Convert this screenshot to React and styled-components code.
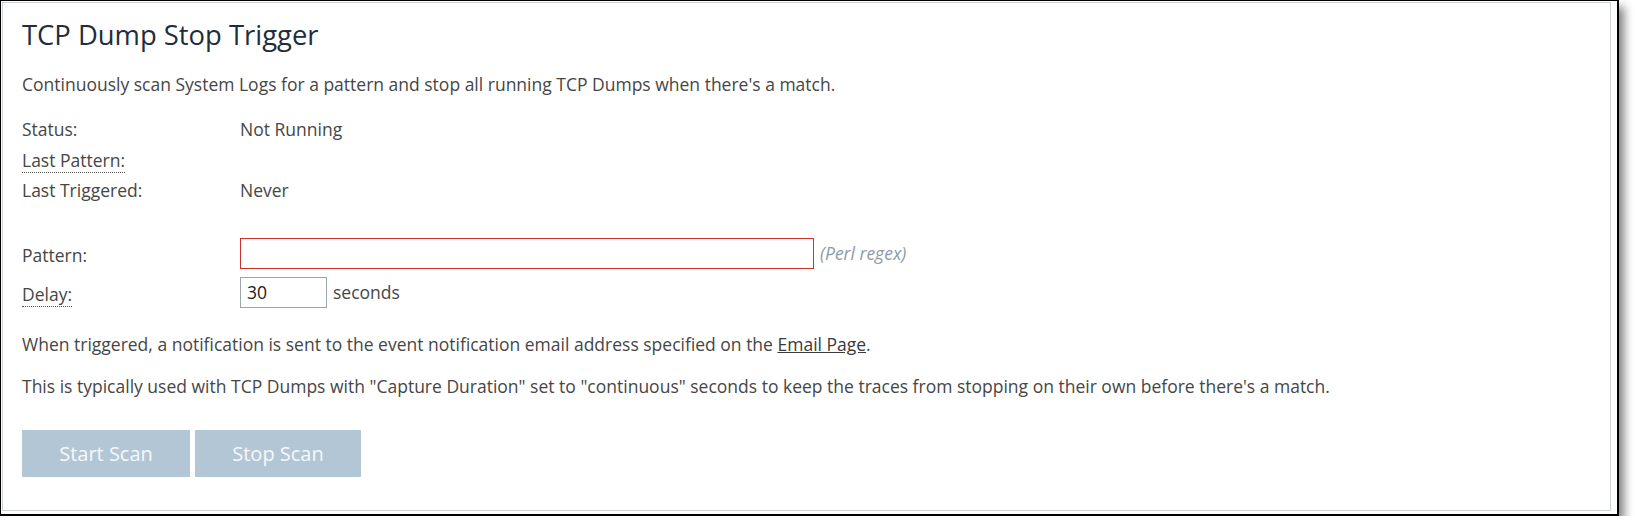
import styled, { createGlobalStyle } from "styled-components"

const GlobalStyle = createGlobalStyle`
  body {
    margin: 0;
    background: #fff;
    font-family: "Open Sans", "Noto Sans", sans-serif;
  }
`

const Frame = styled.div`
  box-sizing: border-box;
  width: 1619px;
  height: 516px;
  border: 1px solid #000;
  border-right-width: 2px;
  border-bottom-width: 2px;
  padding: 1px 6px 3px 1px;
  background: #fff;
  box-shadow: 5px 7px 9px rgba(0, 0, 0, 0.5);
  display: flex;
`

const Panel = styled.div`
  flex: 1;
  border: 1px solid #cfd3d6;
  padding: 14px 19px 0 19px;
  color: #464646;
  font-size: 17.5px;
`

const Title = styled.h1`
  margin: 0;
  font-size: 27.4px;
  line-height: 36px;
  font-weight: 400;
  color: #1f2d3d;
`

const Text = styled.p`
  margin: ${(p) => p.$top || 0}px 0 0;
  line-height: 30px;
`

const InfoGrid = styled.div`
  display: grid;
  grid-template-columns: 218px 1fr;
  grid-auto-rows: 30.5px;
  line-height: 30px;
  margin-top: 15px;
`

const FormGrid = styled.div`
  display: grid;
  grid-template-columns: 218px 1fr;
  grid-auto-rows: 31px;
  row-gap: 8px;
  margin-top: 32px;
  align-items: center;
`

const Label = styled.div`
  padding-top: 3px;
`

const Abbr = styled.span`
  border-bottom: 1px dotted #555;
`

const Field = styled.div`
  display: flex;
  align-items: center;
  gap: 6px;
`

const Input = styled.input`
  box-sizing: border-box;
  width: ${(p) => p.$w}px;
  height: 31px;
  border: 1px solid ${(p) => (p.$invalid ? "#c9342a" : "#9aa6ab")};
  padding: 0 6px;
  font-family: inherit;
  font-size: 17.5px;
  color: #1a1a1a;
  outline: none;
`

const Hint = styled.span`
  font-style: italic;
  color: #8c9ba6;
`

const Link = styled.a`
  color: #3a3a3a;
  text-decoration: underline;
`

const Buttons = styled.div`
  display: flex;
  gap: 5px;
  margin-top: 29px;
`

const Button = styled.button`
  width: ${(p) => p.$w}px;
  height: 47px;
  border: none;
  background: #b3c6d5;
  color: #f5f8fb;
  font-family: inherit;
  font-size: 20px;
  padding: 0;
`

export default function App() {
  return (
    <>
      <GlobalStyle />
      <Frame>
        <Panel>
          <Title>TCP Dump Stop Trigger</Title>
          <Text $top={16}>
            Continuously scan System Logs for a pattern and stop all running TCP Dumps when there's a match.
          </Text>
          <InfoGrid>
            <div>Status:</div>
            <div>Not Running</div>
            <div>
              <Abbr>Last Pattern:</Abbr>
            </div>
            <div></div>
            <div>Last Triggered:</div>
            <div>Never</div>
          </InfoGrid>
          <FormGrid>
            <Label>Pattern:</Label>
            <Field>
              <Input $w={574} $invalid defaultValue="" />
              <Hint>(Perl regex)</Hint>
            </Field>
            <Label>
              <Abbr>Delay:</Abbr>
            </Label>
            <Field>
              <Input $w={87} defaultValue="30" />
              <span>seconds</span>
            </Field>
          </FormGrid>
          <Text $top={21}>
            When triggered, a notification is sent to the event notification email address specified on the{" "}
            <Link>Email Page</Link>.
          </Text>
          <Text $top={12}>
            This is typically used with TCP Dumps with "Capture Duration" set to "continuous" seconds to keep the traces from stopping on their own before there's a match.
          </Text>
          <Buttons>
            <Button $w={168}>Start Scan</Button>
            <Button $w={166}>Stop Scan</Button>
          </Buttons>
        </Panel>
      </Frame>
    </>
  )
}
